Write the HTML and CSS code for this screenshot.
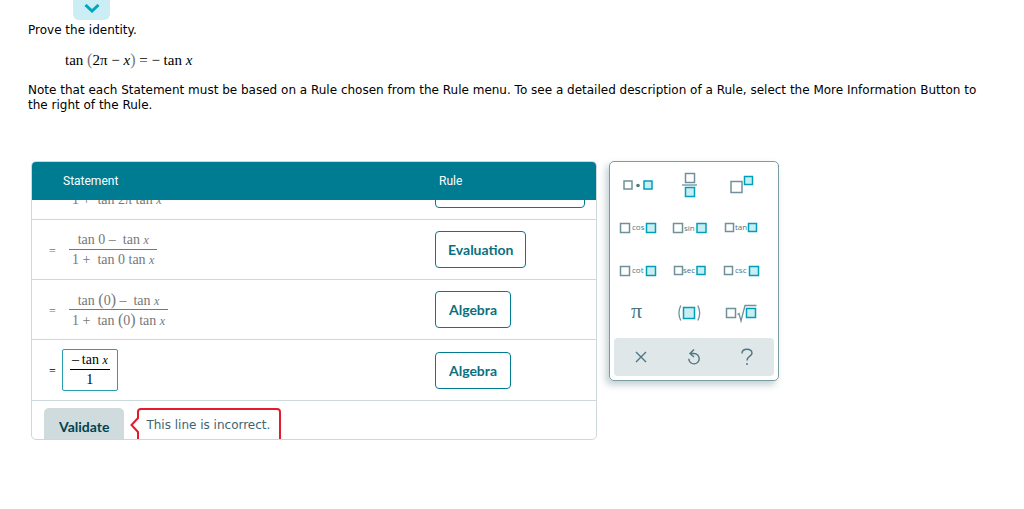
FILE: index.html
```html
<!DOCTYPE html>
<html lang="en">
<head>
  <meta charset="UTF-8" />
  <meta name="viewport" content="width=device-width, initial-scale=1.0" />
  <title>Prove the identity</title>
  <link rel="stylesheet" href="styles.css">
</head>
<body>
  <button class="toggle-tab" aria-label="Expand">
    <svg width="16" height="10" viewBox="0 0 16 10"><path d="M1.5 1 L8 7 L14.5 1" /></svg>
  </button>
  <main>
    <p>Prove the identity.</p>
    <div class="identity">tan <span class="paren">(</span>2π − <i>x</i><span class="paren">)</span> = − tan <i>x</i></div>
    <p>Note that each Statement must be based on a Rule chosen from the Rule menu. To see a detailed description of a Rule, select the More Information Button to the right of the Rule.</p>

    <div class="workspace">
      <table class="proof">
        <thead>
          <tr><th class="col-statement">Statement</th><th class="col-rule">Rule</th></tr>
        </thead>
        <tbody id="lines">
          <tr>
            <td class="col-statement">
              <div class="line"><span class="eq">=</span>
                <div class="frac"><span>tan 2π – tan <i>x</i></span><span>1 +&nbsp; tan 2π tan <i>x</i></span></div>
              </div>
            </td>
            <td><button class="rule-btn wide">Sum and Difference</button></td>
          </tr>
          <tr>
            <td class="col-statement">
              <div class="line"><span class="eq">=</span>
                <div class="frac"><span>tan 0 –&nbsp; tan <i>x</i></span><span>1 +&nbsp; tan 0 tan <i>x</i></span></div>
              </div>
            </td>
            <td><button class="rule-btn">Evaluation</button></td>
          </tr>
          <tr>
            <td class="col-statement">
              <div class="line"><span class="eq">=</span>
                <div class="frac"><span>tan <span class="paren">(</span>0<span class="paren">)</span> –&nbsp; tan <i>x</i></span><span>1 +&nbsp; tan <span class="paren">(</span>0<span class="paren">)</span> tan <i>x</i></span></div>
              </div>
            </td>
            <td><button class="rule-btn">Algebra</button></td>
          </tr>
          <tr class="current">
            <td class="col-statement">
              <div class="line"><span class="eq">=</span>
                <div class="editor" role="textbox" tabindex="0" aria-label="Current statement">
                  <div class="frac"><span>–&thinsp;tan <i>x</i></span><span>1</span></div>
                </div>
              </div>
            </td>
            <td><button class="rule-btn">Algebra</button></td>
          </tr>
          <tr class="actions">
            <td colspan="2">
              <div class="check">
                <button class="validate">Validate</button>
                <div class="error">
                  <svg class="error-tip" width="9" height="18" viewBox="0 0 9 18"><path d="M8 0 V2 L1.5 9 L8 16 V18" /></svg>
                  This line is incorrect.
                </div>
              </div>
            </td>
          </tr>
        </tbody>
      </table>

      <div class="palette">
        <div class="keys">
          <button aria-label="Multiply"><svg viewBox="0 0 52 43"><rect class="box" x="13" y="17" width="8" height="8"/><circle class="dot" cx="27" cy="21.5" r="1.8"/><rect class="box fill" x="33" y="17" width="8" height="8"/></svg></button>
          <button aria-label="Fraction"><svg viewBox="0 0 52 43"><rect class="box" x="22.5" y="9.5" width="9" height="9"/><path class="bar" d="M19 21H34"/><rect class="box fill" x="22.5" y="23.5" width="9" height="9"/></svg></button>
          <button aria-label="Exponent"><svg viewBox="0 0 52 43"><rect class="box" x="16" y="17.5" width="11" height="11"/><rect class="box fill" x="29.5" y="12.5" width="8" height="8"/></svg></button>
          <button><svg viewBox="0 0 52 43"><rect class="box" x="9.5" y="16.5" width="9" height="9"/><text x="21" y="23">cos</text><rect class="box fill" x="35.5" y="16.5" width="9" height="9"/></svg></button>
          <button><svg viewBox="0 0 52 43"><rect class="box" x="10.5" y="16.5" width="9" height="9"/><text x="21" y="24">sin</text><rect class="box fill" x="34" y="16.5" width="9" height="9"/></svg></button>
          <button><svg viewBox="0 0 52 43"><rect class="box" x="10.5" y="16.5" width="8" height="8"/><text x="20" y="23">tan</text><rect class="box fill" x="33.5" y="16.5" width="8" height="8"/></svg></button>
          <button><svg viewBox="0 0 52 43"><rect class="box" x="9.5" y="16.5" width="9" height="9"/><text x="21" y="23">cot</text><rect class="box fill" x="35.5" y="16.5" width="9" height="9"/></svg></button>
          <button><svg viewBox="0 0 52 43"><rect class="box" x="11.5" y="16.5" width="8" height="8"/><text x="20" y="23">sec</text><rect class="box fill" x="34" y="16.5" width="8" height="8"/></svg></button>
          <button><svg viewBox="0 0 52 43"><rect class="box" x="9.5" y="16.5" width="8" height="8"/><text x="20" y="23">csc</text><rect class="box fill" x="34.5" y="16.5" width="9" height="9"/></svg></button>
          <button><svg viewBox="0 0 52 43"><text class="pi" x="20" y="25">π</text></svg></button>
          <button aria-label="Parentheses"><svg viewBox="0 0 52 43"><path class="stroke" d="M17.8 12.5 Q14 20 17.8 27.5 M34.8 12.5 Q38.6 20 34.8 27.5"/><rect class="box fill" x="20.5" y="14.5" width="11" height="11"/></svg></button>
          <button aria-label="Root"><svg viewBox="0 0 52 43"><rect class="box" x="11.5" y="15.5" width="9" height="9"/><path class="stroke" d="M22.5 21.5 L24 20.5 L26 28 L30 12.5 H41.5"/><rect class="box fill" x="31.5" y="15.5" width="9" height="9"/></svg></button>
        </div>
        <div class="tools">
          <button aria-label="Clear"><svg width="14" height="18" viewBox="0 0 14 18"><path d="M2 4 L12 14 M12 4 L2 14"/></svg></button>
          <button aria-label="Undo"><svg width="14" height="18" viewBox="0 0 14 18"><path d="M7 1.5 L3 5.5 L7 9 M3 5.5 H7 A5.2 5.2 0 1 1 1.8 10.7"/></svg></button>
          <button aria-label="Help"><svg width="14" height="18" viewBox="0 0 14 18"><path d="M2 5.5 C2 -0.2 12 -0.2 12 5.2 C12 8.2 7 8.3 7 12.5 M7 15 V17"/></svg></button>
        </div>
      </div>
    </div>
  </main>
  <script>
    // keep the line being edited in view
    document.getElementById("lines").scrollTop = 40;
  </script>
</body>
</html>
```

FILE: styles.css
```css
:root {
  --teal: #007c92;
  --dark-teal: #08707f;
  --line: #ccd8da;
  --slate: #4c7682;
  --red: #e31b2e;
}
* {
  margin: 0;
  padding: 0;
  box-sizing: border-box;
}
body {
  background: #fff;
  color: #000;
  font-family: "DejaVu Sans", sans-serif;
  font-size: 12px;
  line-height: 15px;
}
button {
  background: none;
  border: none;
  cursor: pointer;
  font-family: Lato, sans-serif;
}
svg {
  fill: none;
}
.toggle-tab {
  display: flex;
  align-items: center;
  justify-content: center;
  width: 37px;
  height: 20px;
  padding-bottom: 2px;
  margin-left: 73px;
  background: #caeef3;
  border-radius: 0 0 6px 6px;
}
.toggle-tab svg {
  stroke: #00a5c0;
  stroke-width: 3;
}
main {
  padding: 3px 28px 0;
}
.identity {
  margin: 11px 0 12px 37px;
  font-family: "Liberation Serif", serif;
  font-size: 15px;
  line-height: 22px;
}
.paren {
  font-size: 16px;
  color: #777;
}
.workspace {
  display: flex;
  align-items: flex-start;
  gap: 12px;
  margin: 48px 0 0 3px;
}

/* proof table */
.proof {
  display: block;
  flex: 0 1 566px;
  overflow: hidden;
  border: 1px solid var(--line);
  border-radius: 5px;
}
thead,
tbody {
  display: block;
}
tbody {
  height: 239px;
  overflow: auto;
  scrollbar-width: none;
}
tr {
  display: table;
  width: 100%;
  table-layout: fixed;
  border-spacing: 0;
}
th {
  height: 38px;
  background: var(--teal);
  color: #fff;
  font-family: Roboto, sans-serif;
  font-size: 12px;
  font-weight: 400;
  text-align: left;
}
.col-statement {
  width: 403px;
}
th.col-statement {
  padding-left: 31px;
}
.col-rule {
  padding-left: 4px;
}
td {
  height: 60px;
  border-bottom: 1px solid var(--line);
}
.current td {
  height: 61px;
}
.line {
  display: flex;
  align-items: center;
  padding-left: 17px;
  color: #777;
  font-family: "Liberation Serif", serif;
  font-size: 14px;
}
.line i {
  font-size: 12px;
}
.eq {
  width: 20px;
  padding-top: 3px;
  font-size: 12px;
}
.frac {
  display: flex;
  flex-direction: column;
  text-align: center;
}
.frac > span {
  height: 20px;
  padding: 0 3px;
  line-height: 20px;
  white-space: nowrap;
}
.frac > span:first-child {
  border-bottom: 1px solid currentColor;
}
.current .line {
  color: #000;
}
.current .eq {
  width: 13px;
}
.editor {
  padding: 0 7px;
  border: 1px solid #2b9fb0;
  border-radius: 2px;
}
.editor .frac > span {
  padding: 0 2px;
}
.rule-btn {
  display: block;
  min-width: 76px;
  height: 37px;
  padding: 0 12px;
  border: 1px solid var(--teal);
  border-radius: 4px;
  color: var(--dark-teal);
  font-size: 14px;
  font-weight: 700;
}
.wide {
  width: 150px;
}
.actions td {
  height: 58px;
  border-bottom: none;
  vertical-align: top;
}
.check {
  display: flex;
  align-items: flex-start;
  gap: 13px;
  padding: 7px 12px 0;
}
.validate {
  height: 37px;
  padding: 0 15px;
  background: #d0dbdd;
  border-radius: 5px;
  color: #004450;
  font-size: 14px;
  font-weight: 700;
}
.error {
  position: relative;
  padding: 7px 9px 8px 7px;
  border: 2px solid var(--red);
  border-radius: 4px;
  color: #3c6570;
  font-family: "DejaVu Sans", sans-serif;
  font-size: 12px;
  line-height: 16px;
}
.error-tip {
  position: absolute;
  top: 6px;
  left: -9px;
  background: linear-gradient(to right, transparent 7px, #fff 7px);
  stroke: var(--red);
  stroke-width: 2;
}

/* math palette */
.palette {
  flex: 0 0 auto;
  width: 170px;
  padding: 2px 1px 4px;
  border: 1px solid #7b9ba3;
  border-radius: 5px;
  box-shadow: -3px 4px 7px rgba(60, 100, 110, 0.3);
}
.keys {
  display: grid;
  grid-template-columns: repeat(3, 52px);
}
.keys button {
  height: 43px;
}
.keys svg {
  display: block;
  width: 52px;
  height: 43px;
}
.box {
  stroke: #6f919a;
  stroke-width: 1.5;
}
.box.fill {
  fill: #c8eef2;
  stroke: #009fb8;
}
.dot {
  fill: var(--slate);
}
.bar,
.stroke {
  stroke: #6f919a;
  stroke-width: 1.3;
}
.keys text {
  fill: var(--slate);
  font-family: "Open Sans", sans-serif;
  font-size: 8px;
}
.keys .pi {
  font-family: "Liberation Serif", serif;
  font-size: 22px;
}
.tools {
  display: grid;
  grid-template-columns: repeat(3, 1fr);
  margin: 2px 3px 0;
  background: #dfe7e8;
  border-radius: 4px;
}
.tools button {
  display: flex;
  align-items: center;
  justify-content: center;
  height: 38px;
}
.tools svg {
  stroke: var(--slate);
  stroke-width: 1.4;
}
```
